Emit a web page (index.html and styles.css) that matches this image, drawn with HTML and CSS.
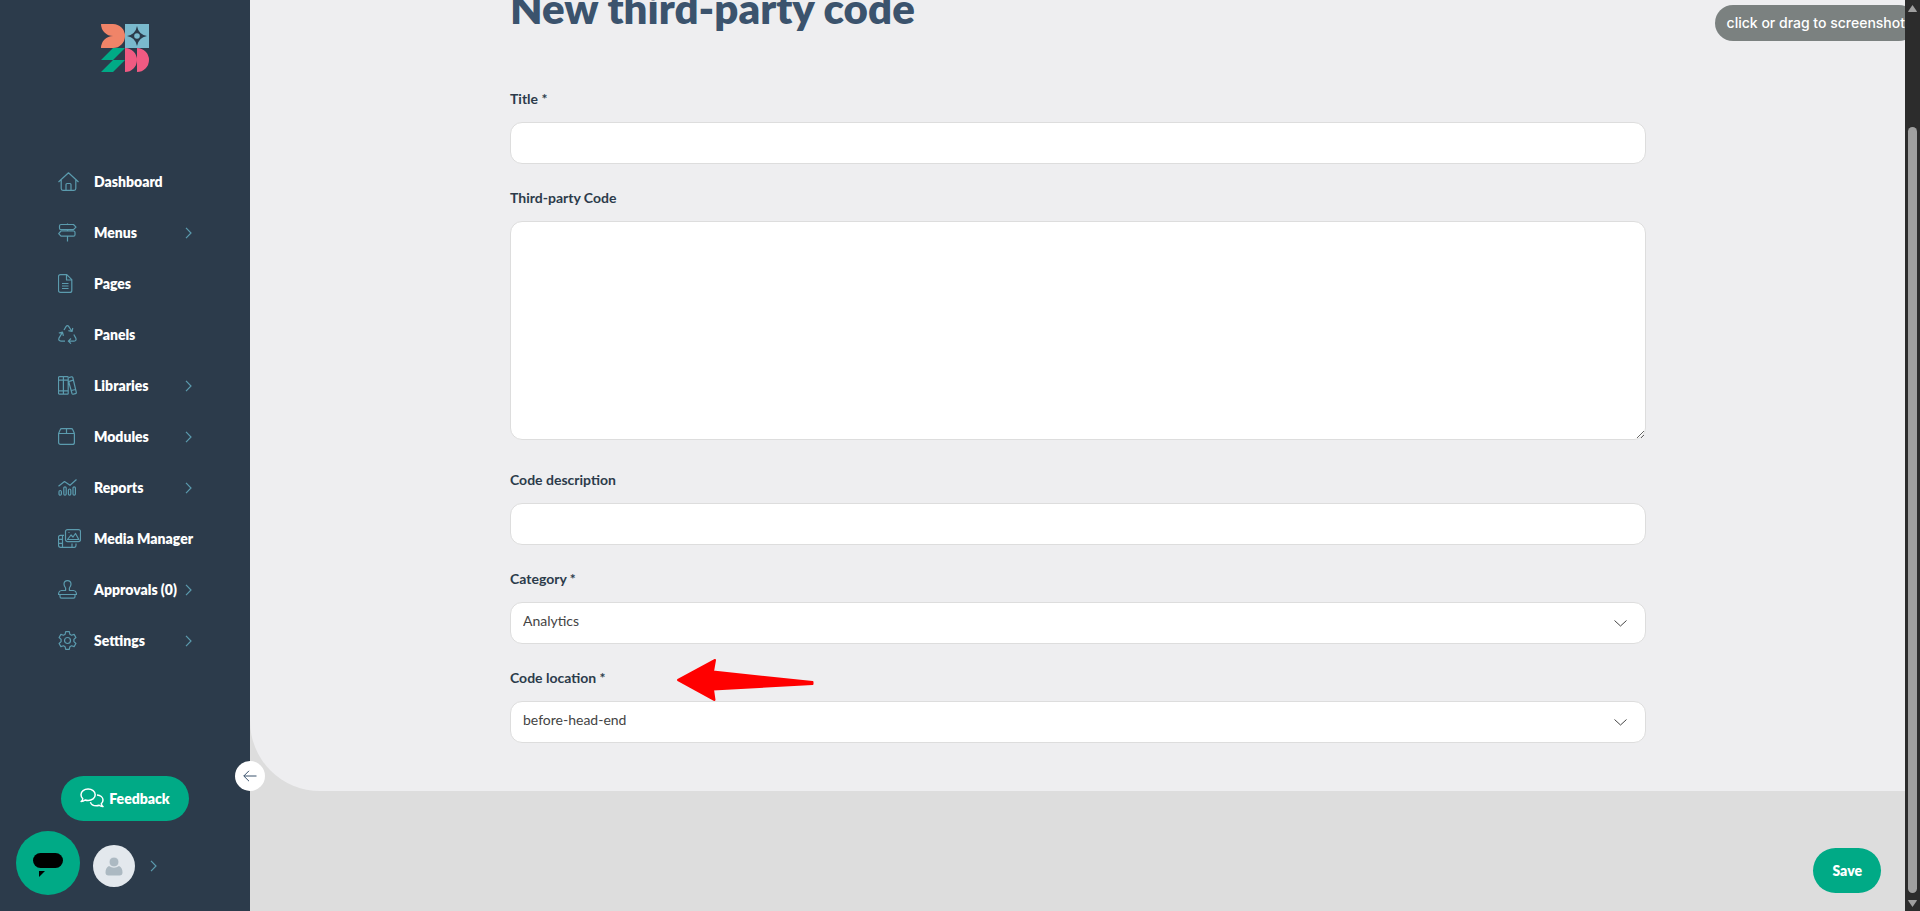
FILE: index.html
```html
<!DOCTYPE html>
<html lang="en">
  <head>
    <meta charset="utf-8" />
    <meta name="viewport" content="width=device-width, initial-scale=1" />
    <title>New third-party code</title>
    <link rel="stylesheet" href="styles.css">
  </head>
  <body>
    <aside class="sidebar">
      <a class="logo" href="#" aria-label="Home">
        <svg width="48" height="48" viewBox="0 0 48 48">
          <path fill="#f08468" d="M0 0h12a12 12 0 0 1 0 24H0a12 12 0 0 1 12-12A12 12 0 0 1 0 0z" />
          <path fill="#7ab9cd" d="M24 0h24v24H24z" />
          <path fill="#2c3b4b" d="M36 2q1.500 8.500 10 10q-8.500 1.500-10 10q-1.500-8.500-10-10q8.500-1.500 10-10z" />
          <circle cx="36" cy="12" r="2.800" fill="#7ab9cd" />
          <path fill="#00aa86" d="M12 24h12L12 36H0zM12 36h12L12 48H0z" />
          <path fill="#f05a82" d="M24 24a12 12 0 0 1 0 24zM36 24a12 12 0 0 1 0 24z" />
        </svg>
      </a>
      <nav class="menu">
        <a href="#">
          <svg class="icon" width="21" height="19" viewBox="0 0 21 19"><path d="M.5 10 10.500.800l10 9.200M3.200 8v8.500q0 1.800 1.800 1.800h11q1.800 0 1.800-1.800V8M8 18v-5.500q0-1 1-1h3q1 0 1 1V18" /></svg>
          <span>Dashboard</span>
        </a>
        <a href="#">
          <svg class="icon" width="19" height="19" viewBox="0 0 19 19"><path d="M9.500.5v1M9.500 6.800v1.200M9.500 13.200V18.500M3 1.500h12.500l2.500 2.600-2.500 2.600H3q-1.500 0-1.500-1.500V3q0-1.500 1.500-1.500zM15.500 8H3L.7 10.600 3 13.200h12.500q1.500 0 1.500-1.500V9.500Q17 8 15.500 8z" /></svg>
          <span>Menus</span>
          <svg class="chevron" width="7" height="12" viewBox="0 0 7 12"><path d="M1 .8 6 6 1 11.200" /></svg>
        </a>
        <a href="#">
          <svg class="icon" width="15" height="19" viewBox="0 0 15 19"><path d="M2.500.6h6.300l5 5v10.800q0 2-2 2H2.500q-2 0-2-2V2.600q0-2 2-2zM8.500.800V6h5M4 9.500h6.500M4 12h6.500M4 14.500h6.500" /></svg>
          <span>Pages</span>
        </a>
        <a href="#">
          <svg class="icon" width="19" height="19" viewBox="0 0 19 19"><path d="M6 5 8 1.600q1.400-2 2.800 0l3 4.700M14.800 3l-.8 3.500-3.600-.8M15.800 9.500l2 3.600q1 2.700-1.800 3H10.500M13 13.500l-2.700 2.600 2.700 2.500M7 16.100H3q-3-.3-2-3L4.400 7.400M.8 8l3.700-.8.9 3.700" /></svg>
          <span>Panels</span>
        </a>
        <a href="#">
          <svg class="icon" width="19" height="19" viewBox="0 0 19 19"><path d="M1.500.6h3.200q.7 0 .7.700v16.200q0 .7-.7.700H1.500q-1 0-1-1V1.600q0-1 1-1zM5.400.6h4q.8 0 .8.800v16q0 .8-.8.800h-4M.6 4.200h9.600M.6 14.800h9.600M11 1.600l2.500-.8q1-.2 1.300.7l3.500 14.800q.2 1-.8 1.400l-2.200.5q-1 .2-1.300-.7L10.500 5M11.200 5.300l4.200-1.200M13.200 14.500l4.500-1" /></svg>
          <span>Libraries</span>
          <svg class="chevron" width="7" height="12" viewBox="0 0 7 12"><path d="M1 .8 6 6 1 11.200" /></svg>
        </a>
        <a href="#">
          <svg class="icon" width="17" height="17" viewBox="0 0 17 17"><path d="M.6 5.500h15.800v8.900q0 2-2 2H2.600q-2 0-2-2V5.500L2.200 1.700Q2.600.6 3.800.6h9.400q1.200 0 1.600 1.100l1.600 3.800M8.500.6v4.900" /></svg>
          <span>Modules</span>
          <svg class="chevron" width="7" height="12" viewBox="0 0 7 12"><path d="M1 .8 6 6 1 11.200" /></svg>
        </a>
        <a href="#">
          <svg class="icon" width="19" height="17" viewBox="0 0 19 17"><path d="M.5 7.300 6.500 2.500l5.500 3.800L18.500.5" /><rect x="1" y="11.500" width="2.400" height="4.700" rx="1.200" /><rect x="5.800" y="7.800" width="2.400" height="8.400" rx="1.200" /><rect x="10.400" y="10" width="2.400" height="6.200" rx="1.200" /><rect x="15" y="7.800" width="2.400" height="8.400" rx="1.200" /></svg>
          <span>Reports</span>
          <svg class="chevron" width="7" height="12" viewBox="0 0 7 12"><path d="M1 .8 6 6 1 11.200" /></svg>
        </a>
        <a href="#">
          <svg class="icon" width="23" height="19" viewBox="0 0 23 19"><rect x="7.500" y=".6" width="15" height="12" rx="2" /><path d="M9.500 10.500 13 6l2 2 2.500-3.500 3.300 6zM10.500 3.500h1M6 6.300H2.500q-2 0-2 2v8q0 2 2 2h14q1.500 0 1.500-2V14.500M4.500 6.500v11.700M.6 10.300h3.700M.6 14.300h3.700M14 14.500v3.700" /></svg>
          <span>Media Manager</span>
        </a>
        <a href="#">
          <svg class="icon" width="19" height="19" viewBox="0 0 19 19"><path d="M7.600 10.500V8Q6 6 6 4q.2-3.400 3.500-3.400T13 4q0 2-1.600 4v2.500h4.100q3 .5 3 4H.5q0-3.500 3-4zM2 14.600v2q0 1.600 1.500 1.600h12q1.500 0 1.500-1.600v-2" /></svg>
          <span>Approvals (0)</span>
          <svg class="chevron" width="7" height="12" viewBox="0 0 7 12"><path d="M1 .8 6 6 1 11.200" /></svg>
        </a>
        <a href="#">
          <svg class="icon" width="19" height="19" viewBox="0 0 19 19"><path d="M7.700.7h3.600l.6 2.600 1.600.9 2.600-.8 1.800 3.100-2 1.900v2.200l2 1.900-1.800 3.100-2.600-.8-1.600.9-.6 2.600H7.700l-.6-2.600-1.600-.9-2.600.8-1.800-3.100 2-1.900V8.400l-2-1.900 1.800-3.100 2.600.8 1.600-.9z" /><circle cx="9.500" cy="9.500" r="3" /></svg>
          <span>Settings</span>
          <svg class="chevron" width="7" height="12" viewBox="0 0 7 12"><path d="M1 .8 6 6 1 11.200" /></svg>
        </a>
      </nav>
      <div class="sidebar-footer">
        <button class="btn btn-feedback" type="button">
          <svg width="24" height="20" viewBox="0 0 24 20"><path d="M2.800 10.700A5.600 5.600 0 0 1 1 6.700C1 3.500 4.200 1 8.100 1s7.100 2.500 7.100 5.800-3.200 5.700-7.100 5.700q-1.600 0-3-.5-1.600 1.600-4 1.600 1.700-1.300 1.700-2.900zM17 6.900c3.400.2 6 2.400 6 5.200q0 2.100-1.700 3.700.2 1.600 1.700 2.700-2.200.2-3.800-1.200-1.300.5-2.900.5c-3 0-5.300-1.500-5.900-3.700" /></svg>
          Feedback
        </button>
        <div class="user">
          <button class="avatar" type="button" aria-label="Account">
            <svg width="18" height="19" viewBox="0 0 18 19"><circle cx="9" cy="5" r="5" /><path d="M4 9q5 3.500 10 0 3.500 1.500 3.500 6.500 0 3-3 3h-11q-3 0-3-3Q.5 10.500 4 9z" /></svg>
          </button>
          <svg class="chevron" width="7" height="12" viewBox="0 0 7 12"><path d="M1 .8 6 6 1 11.200" /></svg>
        </div>
      </div>
      <button class="collapse" type="button" aria-label="Collapse menu">
        <svg width="14" height="12" viewBox="0 0 14 12"><path d="M6 .8.8 6 6 11.200M.8 6H13.500" /></svg>
      </button>
      <button class="chat" type="button" aria-label="Chat">
        <svg width="30" height="24" viewBox="0 0 30 24"><rect width="30" height="15" rx="7.500" /><path d="M6 18h6l-6 6z" /></svg>
      </button>
    </aside>

    <main class="main">
      <form class="panel">
        <h1>New third-party code</h1>
        <div class="field">
          <label for="title">Title *</label>
          <input id="title" type="text" />
        </div>
        <div class="field">
          <label for="code">Third-party Code</label>
          <textarea id="code"></textarea>
        </div>
        <div class="field">
          <label for="description">Code description</label>
          <input id="description" type="text" />
        </div>
        <div class="field">
          <label for="category">Category *</label>
          <select id="category">
            <option>Analytics</option>
          </select>
        </div>
        <div class="field">
          <label for="location">Code location *</label>
          <select id="location">
            <option>before-head-end</option>
          </select>
          <svg class="arrow" width="137" height="42" viewBox="0 0 137 42"><path d="M1 21 38 1 36 12.500 135.500 23v2L36 30.500 37.500 41z" /></svg>
        </div>
      </form>
      <div class="actions">
        <button class="btn" type="button">Save</button>
      </div>
      <div class="hint">click or drag to screenshot</div>
    </main>

    <div class="scrollbar">
      <svg width="9" height="7" viewBox="0 0 9 7"><path d="M4.500 0 9 6.500 8.500 7H.5L0 6.500z" /></svg>
      <div class="thumb"></div>
      <svg width="9" height="7" viewBox="0 0 9 7"><path d="M4.500 7 9 .5 8.500 0H.5L0 .5z" /></svg>
    </div>
  </body>
</html>
```
FILE: styles.css
```css
* {
  box-sizing: border-box;
}
body {
  margin: 0;
  height: 100vh;
  display: flex;
  overflow: hidden;
  background-color: #dddddd;
  color: #2c3b4b;
  font-family: Lato, sans-serif;
  font-size: 14px;
}
button,
input,
select,
textarea {
  font: inherit;
}
button {
  border: 0;
  padding: 0;
  display: flex;
  align-items: center;
  justify-content: center;
}
svg {
  display: block;
  flex: none;
}

/* Sidebar */
.sidebar {
  position: relative;
  z-index: 1;
  flex: 0 0 250px;
  min-width: 0;
  display: flex;
  flex-direction: column;
  padding: 24px 0;
  background-color: #2c3b4b;
}
.logo {
  margin: 0 auto 84px;
}
.menu a {
  display: flex;
  align-items: center;
  height: 51px;
  padding: 0 58px;
  color: #ffffff;
  font-weight: 800;
  text-decoration: none;
  white-space: nowrap;
}
.menu span {
  flex: 1;
}
.icon {
  margin-right: 15px;
  fill: none;
  stroke: #5b9bae;
  stroke-width: 1.2;
  stroke-linejoin: round;
}
.icon[width="19"] {
  margin-right: 17px;
}
.icon[width="17"] {
  margin-right: 19px;
}
.icon[width="15"] {
  margin-right: 21px;
}
.icon[width="23"] {
  margin-right: 13px;
}
.chevron {
  fill: none;
  stroke: #5b9bae;
  stroke-width: 1.2;
}
.sidebar-footer {
  margin-top: auto;
}
.btn {
  height: 45px;
  padding: 0 19px 1px;
  border-radius: 23px;
  background-color: #00aa86;
  color: #ffffff;
  font-weight: 800;
}
.btn-feedback {
  gap: 5px;
  margin: 0 auto 24px;
}
.btn-feedback svg {
  fill: none;
  stroke: #ffffff;
  stroke-width: 1.5;
  stroke-linejoin: round;
}
.user {
  display: flex;
  align-items: center;
  gap: 15px;
  padding-left: 93px;
}
.avatar {
  width: 42px;
  height: 42px;
  border-radius: 50%;
  background-color: #e3e8ed;
}
.avatar svg {
  fill: #acb9c2;
}
.avatar circle {
  stroke: #e3e8ed;
}
.collapse {
  position: absolute;
  right: -15px;
  bottom: 120px;
  width: 30px;
  height: 30px;
  border-radius: 50%;
  background-color: #ffffff;
}
.collapse svg {
  fill: none;
  stroke: #3b536d;
}
.chat {
  position: absolute;
  left: 16px;
  bottom: 16px;
  width: 64px;
  height: 64px;
  padding-top: 4px;
  border-radius: 50%;
  background-color: #00aa86;
}

/* Form */
.main {
  position: relative;
  flex: 1;
  min-width: 0;
  display: flex;
  flex-direction: column;
  overflow: hidden;
}
.panel {
  padding: 0 259px 24px 260px;
  border-bottom-left-radius: 70px;
  background-color: #eeeef0;
}
h1 {
  margin: -17px 0 56px;
  color: #3b536d;
  font-size: 42px;
  font-weight: 800;
  line-height: 50px;
}
.field {
  position: relative;
  margin-bottom: 24px;
}
label {
  display: block;
  margin-bottom: 14px;
  font-weight: 700;
  line-height: 19px;
}
input,
select,
textarea {
  display: block;
  width: 100%;
  height: 42px;
  padding: 8px 12px;
  border: 1px solid #dddddd;
  border-radius: 12px;
  background-color: #ffffff;
  color: #444444;
}
textarea {
  height: 219px;
  margin-bottom: 30px;
  resize: vertical;
}
select {
  appearance: none;
  padding: 8px 12px 13px;
  background-image: url("data:image/svg+xml,%3Csvg xmlns='http://www.w3.org/2000/svg' width='13' height='7'%3E%3Cpath d='M.5.5 6.500 6 12.500.5' fill='none' stroke='%23444'/%3E%3C/svg%3E");
  background-repeat: no-repeat;
  background-position: right 18px center;
}
.arrow {
  position: absolute;
  left: 167px;
  top: -9px;
  fill: #ff0000;
  stroke: #ff0000;
  stroke-width: 2;
  stroke-linejoin: round;
}
.actions {
  flex: 1;
  display: flex;
  align-items: flex-end;
  justify-content: flex-end;
  padding: 18px 24px;
}
.hint {
  position: absolute;
  top: 5px;
  right: -12px;
  padding: 0 12px;
  border-radius: 18px;
  background-color: #7b8180;
  color: #ffffff;
  font-family: Inter, sans-serif;
  font-weight: 500;
  line-height: 36px;
}

.scrollbar {
  flex: 0 0 15px;
  display: flex;
  flex-direction: column;
  align-items: center;
  padding: 5px 0 4px;
  background-color: #2c2c2c;
}
.scrollbar svg {
  fill: #9f9f9f;
}
.thumb {
  flex: 1;
  width: 9px;
  margin: 115px 0 7px;
  border-radius: 5px;
  background-color: #9f9f9f;
}
```
